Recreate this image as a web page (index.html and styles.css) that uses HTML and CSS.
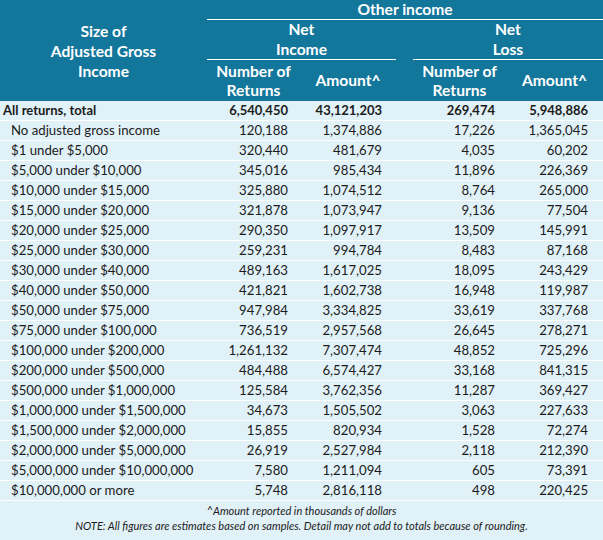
FILE: index.html
```html
<!DOCTYPE html>
<html>
<head>
<meta charset="utf-8">
<link rel="stylesheet" href="styles.css">
</head>
<body>
<table class="tbl">
  <colgroup>
    <col class="c-label">
    <col class="c-num">
    <col class="c-amt">
    <col class="c-gap">
    <col class="c-num2">
    <col class="c-amt2">
  </colgroup>
  <thead>
    <tr class="h1">
      <th rowspan="3" class="h-label">Size of<br>Adjusted Gross<br>Income</th>
      <th colspan="5" class="h-group">Other income</th>
    </tr>
    <tr class="h2">
      <th colspan="2" class="h-sub">Net<br>Income</th>
      <th class="h-gap"></th>
      <th colspan="2" class="h-sub">Net<br>Loss</th>
    </tr>
    <tr class="h3">
      <th class="h-col">Number of<br>Returns</th>
      <th class="h-col">Amount^</th>
      <th class="h-gap"></th>
      <th class="h-col">Number of<br>Returns</th>
      <th class="h-col">Amount^</th>
    </tr>
  </thead>
  <tbody>
    <tr class="total"><td class="lbl lbl-total">All returns, total</td><td class="n n2">6,540,450</td><td class="n n3">43,121,203</td><td></td><td class="n n4">269,474</td><td class="n n5">5,948,886</td></tr>
    <tr><td class="lbl">No adjusted gross income</td><td class="n n2">120,188</td><td class="n n3">1,374,886</td><td></td><td class="n n4">17,226</td><td class="n n5">1,365,045</td></tr>
    <tr><td class="lbl">$1 under $5,000</td><td class="n n2">320,440</td><td class="n n3">481,679</td><td></td><td class="n n4">4,035</td><td class="n n5">60,202</td></tr>
    <tr><td class="lbl">$5,000 under $10,000</td><td class="n n2">345,016</td><td class="n n3">985,434</td><td></td><td class="n n4">11,896</td><td class="n n5">226,369</td></tr>
    <tr><td class="lbl">$10,000 under $15,000</td><td class="n n2">325,880</td><td class="n n3">1,074,512</td><td></td><td class="n n4">8,764</td><td class="n n5">265,000</td></tr>
    <tr><td class="lbl">$15,000 under $20,000</td><td class="n n2">321,878</td><td class="n n3">1,073,947</td><td></td><td class="n n4">9,136</td><td class="n n5">77,504</td></tr>
    <tr><td class="lbl">$20,000 under $25,000</td><td class="n n2">290,350</td><td class="n n3">1,097,917</td><td></td><td class="n n4">13,509</td><td class="n n5">145,991</td></tr>
    <tr><td class="lbl">$25,000 under $30,000</td><td class="n n2">259,231</td><td class="n n3">994,784</td><td></td><td class="n n4">8,483</td><td class="n n5">87,168</td></tr>
    <tr><td class="lbl">$30,000 under $40,000</td><td class="n n2">489,163</td><td class="n n3">1,617,025</td><td></td><td class="n n4">18,095</td><td class="n n5">243,429</td></tr>
    <tr><td class="lbl">$40,000 under $50,000</td><td class="n n2">421,821</td><td class="n n3">1,602,738</td><td></td><td class="n n4">16,948</td><td class="n n5">119,987</td></tr>
    <tr><td class="lbl">$50,000 under $75,000</td><td class="n n2">947,984</td><td class="n n3">3,334,825</td><td></td><td class="n n4">33,619</td><td class="n n5">337,768</td></tr>
    <tr><td class="lbl">$75,000 under $100,000</td><td class="n n2">736,519</td><td class="n n3">2,957,568</td><td></td><td class="n n4">26,645</td><td class="n n5">278,271</td></tr>
    <tr><td class="lbl">$100,000 under $200,000</td><td class="n n2">1,261,132</td><td class="n n3">7,307,474</td><td></td><td class="n n4">48,852</td><td class="n n5">725,296</td></tr>
    <tr><td class="lbl">$200,000 under $500,000</td><td class="n n2">484,488</td><td class="n n3">6,574,427</td><td></td><td class="n n4">33,168</td><td class="n n5">841,315</td></tr>
    <tr><td class="lbl">$500,000 under $1,000,000</td><td class="n n2">125,584</td><td class="n n3">3,762,356</td><td></td><td class="n n4">11,287</td><td class="n n5">369,427</td></tr>
    <tr><td class="lbl">$1,000,000 under $1,500,000</td><td class="n n2">34,673</td><td class="n n3">1,505,502</td><td></td><td class="n n4">3,063</td><td class="n n5">227,633</td></tr>
    <tr><td class="lbl">$1,500,000 under $2,000,000</td><td class="n n2">15,855</td><td class="n n3">820,934</td><td></td><td class="n n4">1,528</td><td class="n n5">72,274</td></tr>
    <tr><td class="lbl">$2,000,000 under $5,000,000</td><td class="n n2">26,919</td><td class="n n3">2,527,984</td><td></td><td class="n n4">2,118</td><td class="n n5">212,390</td></tr>
    <tr><td class="lbl">$5,000,000 under $10,000,000</td><td class="n n2">7,580</td><td class="n n3">1,211,094</td><td></td><td class="n n4">605</td><td class="n n5">73,391</td></tr>
    <tr><td class="lbl">$10,000,000 or more</td><td class="n n2">5,748</td><td class="n n3">2,816,118</td><td></td><td class="n n4">498</td><td class="n n5">220,425</td></tr>
  </tbody>
  <tfoot>
    <tr><td colspan="6" class="foot">^Amount reported in thousands of dollars<br>NOTE: All figures are estimates based on samples. Detail may not add to totals because of rounding.</td></tr>
  </tfoot>
</table>
</body>
</html>
```

FILE: styles.css
```css
html, body {
  margin: 0;
  padding: 0;
  background: #e1f1f8;
}
.tbl {
  width: 603px;
  table-layout: fixed;
  border-collapse: separate;
  border-spacing: 0;
  font-family: Lato, "Open Sans", sans-serif;
  color: #1b1b1b;
}
.c-label { width: 207px; }
.c-num { width: 93px; }
.c-amt { width: 96px; }
.c-gap { width: 17px; }
.c-num2 { width: 93px; }
.c-amt2 { width: 97px; }

thead th {
  background: #13769b;
  color: #fff;
  font-weight: 700;
  font-size: 15.6px;
  line-height: 20px;
  padding: 0;
  text-align: center;
  vertical-align: middle;
}
.h-group { border-bottom: 1px solid #fff; height: 19px; line-height: 19px; }
.h-sub { border-bottom: 1px solid #fff; height: 39px; line-height: 19.5px; }
.h-gap { border-bottom: 0; }
.h-col { height: 40px; line-height: 19.5px; padding-top: 1px; }

tbody td {
  height: 19px;
  padding: 0;
  font-size: 13.2px;
  line-height: 19px;
  border-bottom: 1px solid #fff;
  white-space: nowrap;
  vertical-align: middle;
}
.lbl { padding-left: 11px; }
.lbl-total { padding-left: 3px; }
.total td { font-weight: 700; font-size: 13px; }
.n { text-align: right; }
.n2 { padding-right: 12px; }
.n3 { padding-right: 14px; }
.n4 { padding-right: 11px; }
.n5 { padding-right: 15px; }

.foot {
  font-style: italic;
  font-size: 11px;
  line-height: 15px;
  text-align: center;
  padding: 2px 0 8px;
  color: #1b1b1b;
}
```
